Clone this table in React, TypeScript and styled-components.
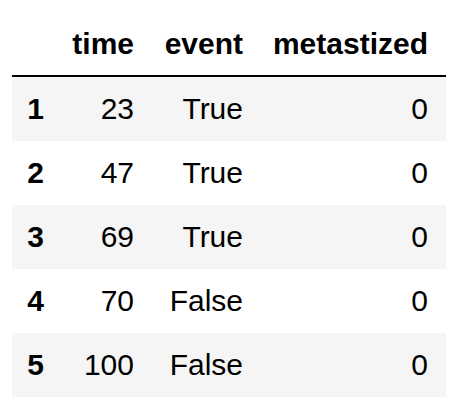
import React from 'react';
import styled, { createGlobalStyle } from 'styled-components';

const GlobalStyle = createGlobalStyle`
  html, body {
    margin: 0;
    padding: 0;
    background: #ffffff;
  }
`;

const Wrapper = styled.div`
  padding: 12px 12px;
  font-family: 'Liberation Sans', Arial, sans-serif;
  color: #000000;
`;

const Table = styled.table`
  border-collapse: collapse;
  border-spacing: 0;
  table-layout: fixed;
  width: 434px;
  font-size: 30px;
`;

const HeadCell = styled.th`
  text-align: right;
  vertical-align: bottom;
  font-weight: 700;
  line-height: 34px;
  padding: 15px 18px 14px 0;
  border-bottom: 2px solid #000000;
  white-space: nowrap;
`;

const Row = styled.tr<{ striped: boolean }>`
  background: ${props => (props.striped ? '#f5f5f5' : '#ffffff')};
`;

const IndexCell = styled.th`
  text-align: right;
  font-weight: 700;
  line-height: 34px;
  padding: 15px 16px 15px 0;
`;

const Cell = styled.td`
  text-align: right;
  line-height: 34px;
  padding: 15px 18px 15px 0;
  white-space: nowrap;
`;

interface Record {
  time: number;
  event: boolean;
  metastized: number;
}

const rows: Record[] = [
  { time: 23, event: true, metastized: 0 },
  { time: 47, event: true, metastized: 0 },
  { time: 69, event: true, metastized: 0 },
  { time: 70, event: false, metastized: 0 },
  { time: 100, event: false, metastized: 0 },
];

const App: React.FC = () => (
  <Wrapper>
    <GlobalStyle />
    <Table>
      <colgroup>
        <col style={{ width: 48 }} />
        <col style={{ width: 92 }} />
        <col style={{ width: 109 }} />
        <col style={{ width: 185 }} />
      </colgroup>
      <thead>
        <tr>
          <HeadCell />
          <HeadCell>time</HeadCell>
          <HeadCell>event</HeadCell>
          <HeadCell>metastized</HeadCell>
        </tr>
      </thead>
      <tbody>
        {rows.map((row, index) => (
          <Row key={index} striped={index % 2 === 0}>
            <IndexCell>{index + 1}</IndexCell>
            <Cell>{row.time}</Cell>
            <Cell>{row.event ? 'True' : 'False'}</Cell>
            <Cell>{row.metastized}</Cell>
          </Row>
        ))}
      </tbody>
    </Table>
  </Wrapper>
);

export default App;
